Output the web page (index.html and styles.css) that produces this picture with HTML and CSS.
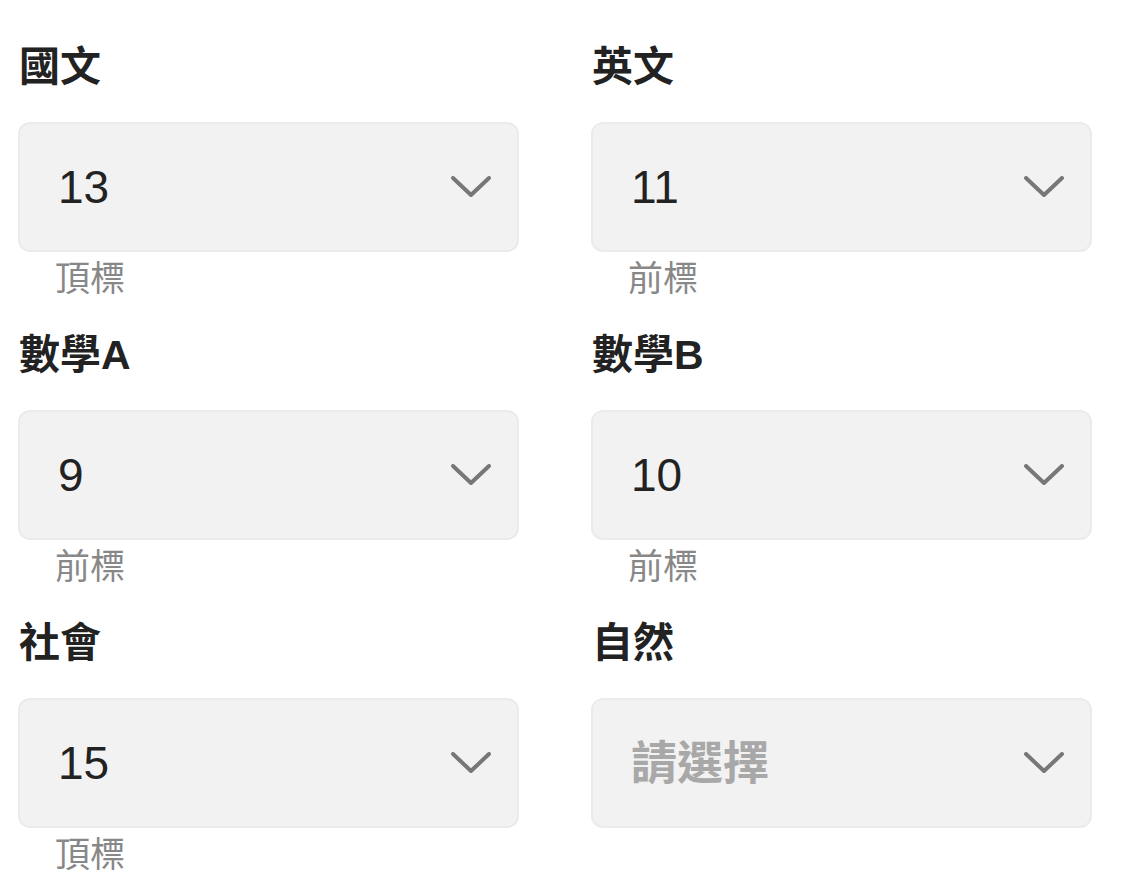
FILE: index.html
```html
<!DOCTYPE html>
<html lang="zh-Hant">
<head>
<meta charset="utf-8">
<link rel="stylesheet" href="styles.css">
</head>
<body>
<div class="form">
  <div class="field">
    <div class="label">國文</div>
    <div class="select"><span class="value">13</span><svg class="chev" viewBox="0 0 40 22"><polyline points="2,2 20,19 38,2"/></svg></div>
    <div class="hint">頂標</div>
  </div>
  <div class="field">
    <div class="label">英文</div>
    <div class="select"><span class="value">11</span><svg class="chev" viewBox="0 0 40 22"><polyline points="2,2 20,19 38,2"/></svg></div>
    <div class="hint">前標</div>
  </div>
  <div class="field">
    <div class="label">數學A</div>
    <div class="select"><span class="value">9</span><svg class="chev" viewBox="0 0 40 22"><polyline points="2,2 20,19 38,2"/></svg></div>
    <div class="hint">前標</div>
  </div>
  <div class="field">
    <div class="label">數學B</div>
    <div class="select"><span class="value">10</span><svg class="chev" viewBox="0 0 40 22"><polyline points="2,2 20,19 38,2"/></svg></div>
    <div class="hint">前標</div>
  </div>
  <div class="field">
    <div class="label">社會</div>
    <div class="select"><span class="value">15</span><svg class="chev" viewBox="0 0 40 22"><polyline points="2,2 20,19 38,2"/></svg></div>
    <div class="hint">頂標</div>
  </div>
  <div class="field">
    <div class="label">自然</div>
    <div class="select"><span class="value placeholder">請選擇</span><svg class="chev" viewBox="0 0 40 22"><polyline points="2,2 20,19 38,2"/></svg></div>
  </div>
</div>
</body>
</html>
```
FILE: styles.css
```css
html, body {
  margin: 0;
  padding: 0;
  background: #ffffff;
}
body {
  font-family: "Liberation Sans", "Noto Sans CJK TC", sans-serif;
  color: #222222;
}
.form {
  display: grid;
  grid-template-columns: 501px 501px;
  column-gap: 72px;
  padding: 39px 0 0 18px;
}
.field {
  height: 288px;
  display: flex;
  flex-direction: column;
}
.label {
  font-size: 41px;
  line-height: 56px;
  font-weight: 700;
  color: #222222;
  margin: 0 0 27px 1px;
}
.select {
  box-sizing: border-box;
  height: 130px;
  background: #f2f2f2;
  border: 2px solid #ebebeb;
  border-radius: 12px;
  display: flex;
  align-items: center;
  justify-content: space-between;
  padding: 0 26px 0 38px;
}
.value {
  font-size: 46px;
  line-height: 1;
  color: #222222;
}
.value.placeholder {
  color: #a8a8a8;
  font-weight: 700;
}
.chev {
  width: 40px;
  height: 22px;
  fill: none;
  stroke: #777777;
  stroke-width: 4;
  stroke-linecap: round;
  stroke-linejoin: round;
}
.hint {
  font-size: 35px;
  line-height: 40px;
  color: #888888;
  margin: 7px 0 0 37px;
}
```
